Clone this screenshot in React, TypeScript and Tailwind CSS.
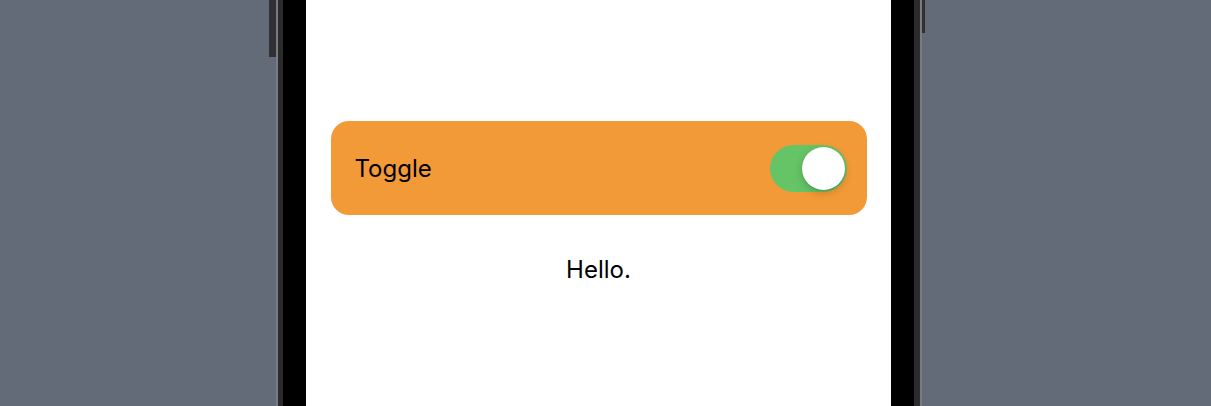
import React, { useState } from 'react';

// iOS-style switch: green track, white knob with a soft shadow
const Switch = ({ on, onChange }: { on: boolean; onChange: (v: boolean) => void }) => (
  <button
    onClick={() => onChange(!on)}
    className={`relative h-[47px] w-[77px] rounded-full transition-colors ${on ? 'bg-[#65c466]' : 'bg-[#e9e9eb]'}`}
  >
    <span
      className={`absolute top-[2px] h-[43px] w-[43px] rounded-full bg-white shadow-[0_3px_8px_rgba(0,0,0,0.18),0_1px_1px_rgba(0,0,0,0.12)] transition-all ${
        on ? 'left-[32px]' : 'left-[2px]'
      }`}
    />
  </button>
);

const App = () => {
  const [on, setOn] = useState(true);

  return (
    <div className="flex h-[406px] w-full overflow-hidden bg-[#636b78] font-['Inter',sans-serif]">
      {/* left edge of the device with the side button */}
      <div className="relative w-[276px] shrink-0">
        <div className="absolute right-0 top-0 h-[57px] w-[7px] bg-[#2f3033]" />
      </div>
      <div className="w-[2px] shrink-0 bg-[#7a7b7e]" />
      <div className="w-[5px] shrink-0 bg-[#2b2b2b]" />
      <div className="w-[23px] shrink-0 bg-black" />

      {/* screen */}
      <div className="flex w-[585px] shrink-0 flex-col items-center bg-white pt-[121px]">
        <div className="flex h-[94px] w-[536px] items-center justify-between rounded-[18px] bg-[#f29a38] pl-[24px] pr-[20px]">
          <span className="pt-[2px] text-[24px] leading-none text-black">Toggle</span>
          <Switch on={on} onChange={setOn} />
        </div>
        <p className="mt-[40px] text-[24px] leading-[29px] text-black">Hello.</p>
      </div>

      <div className="w-[23px] shrink-0 bg-black" />
      <div className="w-[6px] shrink-0 bg-[#2b2b2b]" />
      <div className="w-[2px] shrink-0 bg-[#7a7b7e]" />
      {/* right edge with the power button */}
      <div className="relative flex-1">
        <div className="absolute left-0 top-0 h-[33px] w-[3px] bg-[#2f3033]" />
      </div>
    </div>
  );
};

export default App;
